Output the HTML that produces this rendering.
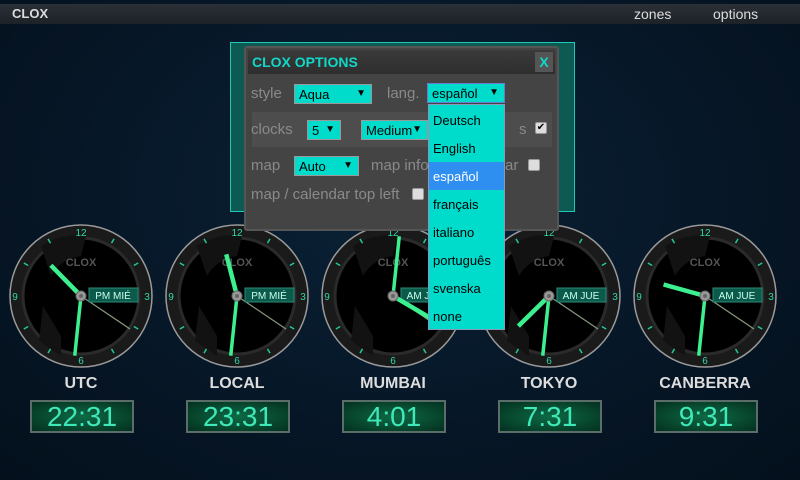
<!DOCTYPE html>
<html><head><meta charset="utf-8"><style>
*{margin:0;padding:0;box-sizing:border-box}
body{width:800px;height:480px;overflow:hidden;background:radial-gradient(ellipse at 50% 40%,#0a2236 0%,#061626 60%,#04101c 100%);font-family:"Liberation Sans",sans-serif;position:relative}
.top{position:absolute;left:0;top:4px;width:800px;height:20px;background:linear-gradient(#2a3036,#1c2228);color:#ddd;font-size:14px}
.top b{position:absolute;left:12px;top:2px;font-size:13px}
.top span{position:absolute;top:2px}
.back{position:absolute;left:230px;top:42px;width:345px;height:170px;background:#0d5a52;border:1px solid #1fc8b8}
.dlg{position:absolute;left:244px;top:46px;width:315px;height:185px;background:#444;border:2px solid #555;border-radius:3px}
.tb{position:absolute;left:2px;top:2px;width:307px;height:24px;background:linear-gradient(#3a3a3a,#2e2e2e);color:#10d8c8;font-weight:bold;font-size:14px;padding:4px 4px}
.x{position:absolute;right:2px;top:2px;width:18px;height:20px;background:#555;text-align:center;font-size:14px;padding-top:2px}
.l{position:absolute;color:#8a8a8a;font-size:15px}
.s{position:absolute;background:#00dccc;border:1px solid #999;color:#000;font-size:13px;padding:2px 4px;height:20px}
.s i{position:absolute;right:5px;top:3px;font-style:normal;font-size:10px}
.cb{position:absolute;width:12px;height:12px;background:#ddd;border:1px solid #999;border-radius:2px}
.dd{position:absolute;left:428px;top:104px;width:77px;height:226px;background:#00dccc;border:1px solid #8898b8}
.dd div{height:28px;font-size:13px;padding:7px 4px;color:#000}
.lbl{position:absolute;top:375px;width:120px;text-align:center;color:#ddd;font-weight:bold;font-size:16px}
.dig{position:absolute;top:400px;width:104px;height:33px;background:radial-gradient(ellipse,#0d6a45,#04301f);border:2px solid #5a6d68;color:#3fe8b8;font-size:28px;text-align:center;line-height:29px}
</style></head><body>
<div class="top"><b>CLOX</b><span style="left:634px">zones</span><span style="left:713px">options</span></div>
<div class="back"></div>
<svg width="800" height="480" style="position:absolute;left:0;top:0">
<defs>
<g id="face">
<circle r="71" fill="#1a1a1a" stroke="#9a9a9a" stroke-width="1.5"/>
<circle r="58" fill="#000" stroke="#2a2a2a" stroke-width="3"/>
<path d="M-40,-50 A64,64 0 0 1 5,-60 L0,-40 A40,40 0 0 0 -30,-20 Z" fill="#121212"/>
<path d="M-38,10 L-20,40 L-20,60 L-42,45 Z" fill="#121212"/>
<text x="0" y="-30" fill="#555" font-size="11" font-weight="bold" text-anchor="middle" font-family="Liberation Sans">CLOX</text>
<g stroke="#20c8a0" stroke-width="1.5">
<line x1="0" y1="-61" x2="0" y2="-66" transform="rotate(30)"/><line x1="0" y1="-61" x2="0" y2="-66" transform="rotate(60)"/>
<line x1="0" y1="-61" x2="0" y2="-66" transform="rotate(120)"/><line x1="0" y1="-61" x2="0" y2="-66" transform="rotate(150)"/>
<line x1="0" y1="-61" x2="0" y2="-66" transform="rotate(210)"/><line x1="0" y1="-61" x2="0" y2="-66" transform="rotate(240)"/>
<line x1="0" y1="-61" x2="0" y2="-66" transform="rotate(300)"/><line x1="0" y1="-61" x2="0" y2="-66" transform="rotate(330)"/>
</g>
<g fill="#30d8a8" font-size="10" font-family="Liberation Sans" text-anchor="middle">
<text x="0" y="-60">12</text><text x="0" y="68">6</text><text x="66" y="4">3</text><text x="-66" y="4">9</text></g>
<line x1="0" y1="0" x2="49" y2="33" stroke="#889a80" stroke-width="1.2"/>
<line x1="-5" y1="-3" x2="0" y2="0" stroke="#889a80" stroke-width="1.2"/>
</g>
<g id="cap"><circle r="5" fill="#999" stroke="#666"/><circle r="2" fill="#666"/></g>
</defs>
<g transform="translate(81,296)"><use href="#face"/>
<rect x="8" y="-8" width="49" height="14" fill="#0c5a4a" stroke="#2a8a78"/><text x="32" y="3" fill="#c8fff0" font-size="10" text-anchor="middle" font-family="Liberation Sans">PM  MIÉ</text>
<line x1="0" y1="0" x2="0" y2="-43" stroke="#3cf090" stroke-width="4.5" transform="rotate(315.5)"/>
<line x1="0" y1="0" x2="0" y2="-60" stroke="#3cf090" stroke-width="3.5" transform="rotate(186)"/><use href="#cap"/></g>
<g transform="translate(237,296)"><use href="#face"/>
<rect x="8" y="-8" width="49" height="14" fill="#0c5a4a" stroke="#2a8a78"/><text x="32" y="3" fill="#c8fff0" font-size="10" text-anchor="middle" font-family="Liberation Sans">PM  MIÉ</text>
<line x1="0" y1="0" x2="0" y2="-43" stroke="#3cf090" stroke-width="4.5" transform="rotate(345.5)"/>
<line x1="0" y1="0" x2="0" y2="-60" stroke="#3cf090" stroke-width="3.5" transform="rotate(186)"/><use href="#cap"/></g>
<g transform="translate(393,296)"><use href="#face"/>
<rect x="8" y="-8" width="49" height="14" fill="#0c5a4a" stroke="#2a8a78"/><text x="32" y="3" fill="#c8fff0" font-size="10" text-anchor="middle" font-family="Liberation Sans">AM  JUE</text>
<line x1="0" y1="0" x2="0" y2="-43" stroke="#3cf090" stroke-width="4.5" transform="rotate(120.5)"/>
<line x1="0" y1="0" x2="0" y2="-60" stroke="#3cf090" stroke-width="3.5" transform="rotate(6)"/><use href="#cap"/></g>
<g transform="translate(549,296)"><use href="#face"/>
<rect x="8" y="-8" width="49" height="14" fill="#0c5a4a" stroke="#2a8a78"/><text x="32" y="3" fill="#c8fff0" font-size="10" text-anchor="middle" font-family="Liberation Sans">AM  JUE</text>
<line x1="0" y1="0" x2="0" y2="-43" stroke="#3cf090" stroke-width="4.5" transform="rotate(225.5)"/>
<line x1="0" y1="0" x2="0" y2="-60" stroke="#3cf090" stroke-width="3.5" transform="rotate(186)"/><use href="#cap"/></g>
<g transform="translate(705,296)"><use href="#face"/>
<rect x="8" y="-8" width="49" height="14" fill="#0c5a4a" stroke="#2a8a78"/><text x="32" y="3" fill="#c8fff0" font-size="10" text-anchor="middle" font-family="Liberation Sans">AM  JUE</text>
<line x1="0" y1="0" x2="0" y2="-43" stroke="#3cf090" stroke-width="4.5" transform="rotate(285.5)"/>
<line x1="0" y1="0" x2="0" y2="-60" stroke="#3cf090" stroke-width="3.5" transform="rotate(186)"/><use href="#cap"/></g>
</svg>
<div class="lbl" style="left:21px">UTC</div><div class="lbl" style="left:177px">LOCAL</div><div class="lbl" style="left:333px">MUMBAI</div><div class="lbl" style="left:489px">TOKYO</div><div class="lbl" style="left:645px">CANBERRA</div>
<div class="dig" style="left:30px">22:31</div><div class="dig" style="left:186px">23:31</div><div class="dig" style="left:342px">4:01</div><div class="dig" style="left:498px">7:31</div><div class="dig" style="left:654px">9:31</div>
<div class="dlg">
<div class="tb">CLOX OPTIONS<div class="x">X</div></div>
<div style="position:absolute;left:6px;top:64px;width:300px;height:35px;background:#4d4d4d"></div>
</div>
<span class="l" style="left:251px;top:85px">style</span>
<div class="s" style="left:294px;top:84px;width:78px">Aqua<i>▼</i></div>
<span class="l" style="left:387px;top:85px">lang.</span>
<div class="s" style="left:427px;top:83px;width:78px;border-color:#6a7ad0">español<i>▼</i></div>
<span class="l" style="left:251px;top:121px">clocks</span>
<div class="s" style="left:307px;top:120px;width:34px">5<i>▼</i></div>
<div class="s" style="left:361px;top:120px;width:67px">Medium<i>▼</i></div>
<span class="l" style="left:519px;top:121px">s</span>
<div class="cb" style="left:535px;top:122px;font-size:10px;line-height:10px;text-align:center">✔</div>
<span class="l" style="left:251px;top:157px">map</span>
<div class="s" style="left:294px;top:156px;width:65px">Auto<i>▼</i></div>
<span class="l" style="left:371px;top:157px">map info</span>
<span class="l" style="left:505px;top:157px">ar</span>
<div class="cb" style="left:528px;top:159px"></div>
<span class="l" style="left:251px;top:186px">map / calendar top left</span>
<div class="cb" style="left:412px;top:188px"></div>
<div class="dd">
<div style="margin-top:1px">Deutsch</div><div>English</div><div style="background:#2f8ff0;color:#fff">español</div><div>français</div><div>italiano</div><div>português</div><div>svenska</div><div>none</div>
</div>
</body></html>
